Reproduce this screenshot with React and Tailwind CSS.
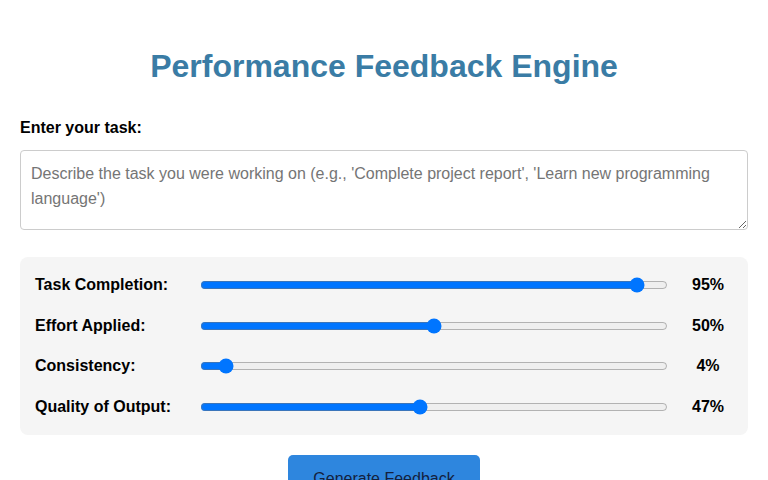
import { useState } from "react";

const metrics = [
  { id: "completion", label: "Task Completion:", value: 95 },
  { id: "effort", label: "Effort Applied:", value: 50 },
  { id: "consistency", label: "Consistency:", value: 4 },
  { id: "quality", label: "Quality of Output:", value: 47 },
];

export default function App() {
  const [task, setTask] = useState("");
  const [values, setValues] = useState(
    Object.fromEntries(metrics.map((m) => [m.id, m.value]))
  );

  const handleSlide = (e) => {
    setValues({ ...values, [e.target.id]: Number(e.target.value) });
  };

  return (
    <div className="min-h-screen bg-white px-5 font-['Liberation_Sans',Arial,sans-serif] text-black">
      <h1 className="pt-[48px] text-center text-[32px] font-bold leading-[1.15] text-[#3a7ca5]">
        Performance Feedback Engine
      </h1>

      <label
        htmlFor="task"
        className="mt-[34px] block text-base font-bold leading-[1.15]"
      >
        Enter your task:
      </label>
      <textarea
        id="task"
        value={task}
        onChange={(e) => setTask(e.target.value)}
        placeholder="Describe the task you were working on (e.g., 'Complete project report', 'Learn new programming language')"
        className="mt-[13px] block h-[80px] w-full rounded border border-[#ccc] px-[10px] pt-[10px] pb-[10px] text-base leading-[25px] placeholder:text-[#757575] focus:outline-none"
      />

      {/* sliders */}
      <div className="mt-[27px] flex flex-col gap-[15px] rounded-lg bg-[#f5f5f5] p-[15px]">
        {metrics.map((m) => (
          <div key={m.id} className="flex h-[25.6px] items-center gap-[15px]">
            <label
              htmlFor={m.id}
              className="w-[150px] shrink-0 text-base font-bold leading-[1.6]"
            >
              {m.label}
            </label>
            <input
              id={m.id}
              type="range"
              min="0"
              max="100"
              value={values[m.id]}
              onChange={handleSlide}
              className="m-0 min-w-0 flex-1"
            />
            <span className="w-[50px] shrink-0 text-center text-base font-bold leading-[1.6]">
              {values[m.id]}%
            </span>
          </div>
        ))}
      </div>

      <div className="mt-[20px] flex justify-center">
        <button className="rounded-[5px] bg-[#2e86de] px-[25px] py-[15px] text-base leading-[1.15] text-[#14213d]">
          Generate Feedback
        </button>
      </div>
    </div>
  );
}
